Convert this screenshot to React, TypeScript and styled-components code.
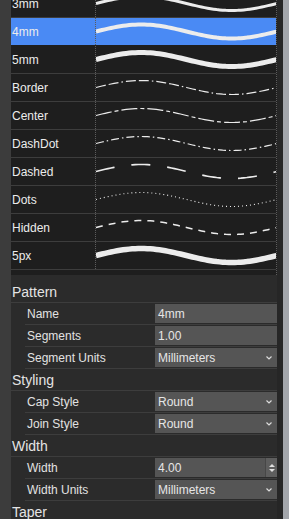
import styled, { createGlobalStyle } from 'styled-components'

const rowHeight = 28
const previewWidth = 181
const waveAmp = 7

const panelBg = '#2b2b2b'
const listBg = '#1e1e1e'
const lineColor = '#3d3d3d'
const strokeColor = '#ececec'

const GlobalStyle = createGlobalStyle`
  html, body {
    margin: 0;
    padding: 0;
    background: ${panelBg};
  }
  body {
    font-family: 'Liberation Sans', Arial, sans-serif;
    color: #e2e2e2;
  }
`

const Frame = styled.div`
  display: flex;
  width: 289px;
  height: 519px;
  overflow: hidden;
  background: ${panelBg};
`

const Margin = styled.div`
  flex: none;
  width: 11px;
  background: #3c3c3c;
`

const Content = styled.div`
  flex: 1;
  min-width: 0;
  display: flex;
  flex-direction: column;
`

const Gutter = styled.div`
  flex: none;
  width: 6px;
  background: #262626;
`

const ScrollThumb = styled.div`
  flex: none;
  width: 6px;
  background: #a3a6ab;
`

const List = styled.div`
  flex: none;
  height: 275px;
  background: ${listBg};
  border-right: 1px dotted #5c5c5c;
  box-sizing: border-box;
  overflow: hidden;
`

const ListInner = styled.div`
  margin-top: -10px;
`

const ListRow = styled.div<{ $selected?: boolean }>`
  display: flex;
  height: ${rowHeight}px;
  background: ${({ $selected }) => ($selected ? '#4a8af4' : 'transparent')};
  border-bottom: 1px solid ${({ $selected }) => ($selected ? listBg : lineColor)};
  box-sizing: border-box;
`

const StyleName = styled.div`
  flex: none;
  width: 85px;
  display: flex;
  align-items: center;
  padding-left: 1px;
  box-sizing: border-box;
  border-right: 1px dotted #5c5c5c;
  font-size: 12px;
  color: #ececec;
`

const Preview = styled.div`
  flex: 1;
  display: flex;
  align-items: center;
`

const Properties = styled.div`
  display: flex;
  flex-direction: column;
  margin-top: 6px;
`

const SectionRow = styled.div`
  height: 22px;
  display: flex;
  align-items: center;
  padding-left: 1px;
  box-sizing: border-box;
  border-bottom: 1px solid ${lineColor};
  font-size: 14px;
  color: #e4e4e4;
`

const PropRow = styled.div`
  height: 22px;
  display: flex;
  align-items: center;
  margin-left: 14px;
  box-sizing: border-box;
  border-bottom: 1px solid ${lineColor};
`

const PropLabel = styled.div`
  flex: none;
  width: 130px;
  padding-left: 2px;
  box-sizing: border-box;
  font-size: 12px;
  color: #e2e2e2;
`

const ValueBox = styled.div`
  flex: 1;
  height: 19px;
  display: flex;
  align-items: center;
  background: #555555;
  font-size: 12px;
  color: #e6e6e6;
`

const ValueText = styled.span`
  flex: 1;
  padding-left: 3px;
`

const Chevron = styled.svg`
  flex: none;
  margin-right: 5px;
`

const Spinner = styled.div`
  flex: none;
  width: 11px;
  height: 100%;
  display: flex;
  flex-direction: column;
  align-items: center;
  justify-content: center;
  gap: 2px;
  border-left: 1px solid #474747;
  background: #5e5e5e;
`

const wavePath = (w: number, h: number, amp: number) => {
  const steps = 60
  let d = ''
  for (let i = 0; i <= steps; i++) {
    const x = (i / steps) * w
    const y = h / 2 - amp * Math.sin((i / steps) * Math.PI * 2)
    d += `${i === 0 ? 'M' : 'L'}${x.toFixed(2)} ${y.toFixed(2)} `
  }
  return d
}

const lineStyles = [
  { name: '3mm', width: 3 },
  { name: '4mm', width: 4, selected: true },
  { name: '5mm', width: 5 },
  { name: 'Border', width: 1.2, dash: '10 3 10 3 1.5 3' },
  { name: 'Center', width: 1.2, dash: '16 3 4 3' },
  { name: 'DashDot', width: 1.2, dash: '8 3 1.5 3' },
  { name: 'Dashed', width: 1.6, dash: '19 17' },
  { name: 'Dots', width: 1.1, dash: '1 3' },
  { name: 'Hidden', width: 1.5, dash: '7 6' },
  { name: '5px', width: 5.5 },
]

const Wave = ({ width, dash }: { width: number; dash?: string }) => (
  <svg width={previewWidth} height={rowHeight - 1} viewBox={`0 0 ${previewWidth} ${rowHeight - 1}`}>
    <path
      d={wavePath(previewWidth, rowHeight - 1, waveAmp)}
      fill="none"
      stroke={strokeColor}
      strokeWidth={width}
      strokeDasharray={dash}
    />
  </svg>
)

const DropChevron = () => (
  <Chevron width="6" height="4" viewBox="0 0 6 4">
    <path d="M0.5 0.5 L3 3 L5.5 0.5" fill="none" stroke="#dcdcdc" strokeWidth="1.2" />
  </Chevron>
)

const SpinArrows = () => (
  <Spinner>
    <svg width="6" height="3" viewBox="0 0 6 3">
      <path d="M0 3 L3 0 L6 3 Z" fill="#e0e0e0" />
    </svg>
    <svg width="6" height="3" viewBox="0 0 6 3">
      <path d="M0 0 L3 3 L6 0 Z" fill="#e0e0e0" />
    </svg>
  </Spinner>
)

type Prop = { label: string; value: string; kind?: 'select' | 'spin' }

const sections: { title: string; props: Prop[] }[] = [
  {
    title: 'Pattern',
    props: [
      { label: 'Name', value: '4mm' },
      { label: 'Segments', value: '1.00' },
      { label: 'Segment Units', value: 'Millimeters', kind: 'select' },
    ],
  },
  {
    title: 'Styling',
    props: [
      { label: 'Cap Style', value: 'Round', kind: 'select' },
      { label: 'Join Style', value: 'Round', kind: 'select' },
    ],
  },
  {
    title: 'Width',
    props: [
      { label: 'Width', value: '4.00', kind: 'spin' },
      { label: 'Width Units', value: 'Millimeters', kind: 'select' },
    ],
  },
  { title: 'Taper', props: [] },
]

export default function App() {
  return (
    <>
      <GlobalStyle />
      <Frame>
        <Margin />
        <Content>
          <List>
            <ListInner>
              {lineStyles.map((s) => (
                <ListRow key={s.name} $selected={s.selected}>
                  <StyleName>{s.name}</StyleName>
                  <Preview>
                    <Wave width={s.width} dash={s.dash} />
                  </Preview>
                </ListRow>
              ))}
            </ListInner>
          </List>
          <Properties>
            {sections.map((sec) => (
              <div key={sec.title}>
                <SectionRow>{sec.title}</SectionRow>
                {sec.props.map((p) => (
                  <PropRow key={p.label}>
                    <PropLabel>{p.label}</PropLabel>
                    <ValueBox>
                      <ValueText>{p.value}</ValueText>
                      {p.kind === 'select' && <DropChevron />}
                      {p.kind === 'spin' && <SpinArrows />}
                    </ValueBox>
                  </PropRow>
                ))}
              </div>
            ))}
          </Properties>
        </Content>
        <Gutter />
        <ScrollThumb />
      </Frame>
    </>
  )
}
